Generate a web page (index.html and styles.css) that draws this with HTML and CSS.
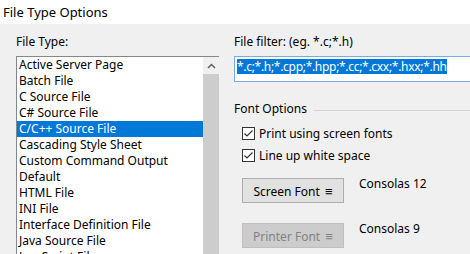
FILE: index.html
```html
<!DOCTYPE html>
<html lang="en">
<head>
    <meta charset="UTF-8">
    <meta name="viewport" content="width=device-width, initial-scale=1.0">
    <title>File Type Options</title>
    <link rel="stylesheet" href="styles.css">
</head>
<body>
    <div class="titlebar">File Type Options</div>
    <div class="dialog">
        <div class="left">
            <div class="label">File Type:</div>
            <div class="listbox">
                <ul class="items">
                    <li>Active Server Page</li>
                    <li>Batch File</li>
                    <li>C Source File</li>
                    <li>C# Source File</li>
                    <li class="selected">C/C++ Source File</li>
                    <li>Cascading Style Sheet</li>
                    <li>Custom Command Output</li>
                    <li>Default</li>
                    <li>HTML File</li>
                    <li>INI File</li>
                    <li>Interface Definition File</li>
                    <li>Java Source File</li>
                    <li>JavaScript File</li>
                </ul>
                <div class="scrollbar">
                    <div class="arrow">
                        <svg width="9" height="6" viewBox="0 0 9 6"><path d="M1 5 L4.5 1.5 L8 5" fill="none" stroke="#606060" stroke-width="1.5"/></svg>
                    </div>
                    <div class="thumb"></div>
                </div>
            </div>
        </div>
        <div class="right">
            <div class="label">File filter: (eg. *.c;*.h)</div>
            <div class="filter"><span class="sel">*.c;*.h;*.cpp;*.hpp;*.cc;*.cxx;*.hxx;*.hh</span></div>
            <div class="group">
                <div class="legend"><span>Font Options</span><span class="rule"></span></div>
                <div class="check">
                    <span class="box"><svg width="11" height="11" viewBox="0 0 11 11"><path d="M1.5 5.5 L4 8 L9.5 2.5" fill="none" stroke="#333" stroke-width="1.2"/></svg></span>
                    <span>Print using screen fonts</span>
                </div>
                <div class="check">
                    <span class="box"><svg width="11" height="11" viewBox="0 0 11 11"><path d="M1.5 5.5 L4 8 L9.5 2.5" fill="none" stroke="#333" stroke-width="1.2"/></svg></span>
                    <span>Line up white space</span>
                </div>
                <div class="font-row">
                    <button class="font-btn">Screen Font <span class="menu">&#8801;</span></button>
                    <span class="font-name">Consolas 12</span>
                </div>
                <div class="font-row">
                    <button class="font-btn" disabled>Printer Font <span class="menu">&#8801;</span></button>
                    <span class="font-name">Consolas 9</span>
                </div>
            </div>
        </div>
    </div>
</body>
</html>
```

FILE: styles.css
```css
body {
    margin: 0;
    width: 470px;
    height: 254px;
    overflow: hidden;
    background-color: #f0f0f0;
    font-family: "Noto Sans", "Segoe UI", sans-serif;
    font-size: 12px;
    line-height: 16px;
    color: #000;
}
.titlebar {
    height: 24px;
    line-height: 24px;
    padding-left: 3px;
    background-color: #fff;
    font-size: 13px;
}
.dialog {
    display: flex;
    gap: 15px;
    padding: 10px 0 0 16px;
}
.left {
    width: 203px;
    flex-shrink: 0;
}
.label {
    margin-bottom: 6px;
}
.listbox {
    display: flex;
    height: 220px;
    border: 1px solid #828790;
    border-right: none;
    background-color: #fff;
}
.items {
    flex: 1;
    list-style: none;
    margin: 0;
    padding: 0;
}
.items li {
    height: 16px;
    padding-left: 2px;
    white-space: nowrap;
}
.items li.selected {
    background-color: #0078d7;
    color: #fff;
}
.scrollbar {
    width: 16px;
    display: flex;
    flex-direction: column;
    background-color: #f0f0f0;
}
.arrow {
    height: 17px;
    display: flex;
    justify-content: center;
    align-items: center;
}
.thumb {
    flex: 1;
    background-color: #cdcdcd;
}
.right {
    flex: 1;
    min-width: 0;
}
.filter {
    width: 260px;
    height: 22px;
    border: 1px solid #7aa8e0;
    background-color: #fff;
    padding: 1px 2px;
    box-sizing: content-box;
    white-space: nowrap;
}
.sel {
    display: inline-block;
    height: 15px;
    line-height: 15px;
    margin-top: 1px;
    letter-spacing: -0.3px;
    background-color: #0078d7;
    color: #fff;
}
.group {
    margin-top: 19px;
}
.legend {
    display: flex;
    align-items: center;
    gap: 7px;
    margin-bottom: 9px;
}
.rule {
    flex: 1;
    height: 1px;
    background-color: #d5d5d5;
    margin-top: 2px;
}
.check {
    display: flex;
    align-items: flex-start;
    gap: 4px;
    margin-left: 8px;
    margin-bottom: 6px;
}
.box {
    width: 11px;
    height: 11px;
    margin-top: 1px;
    border: 1px solid #333;
    background-color: #fff;
    display: flex;
}
.font-row {
    display: flex;
    align-items: flex-start;
    gap: 15px;
    margin-left: 8px;
    margin-top: 14px;
}
.font-row + .font-row {
    margin-top: 20px;
}
.font-btn {
    width: 102px;
    height: 25px;
    padding: 0;
    border: 1px solid #adadad;
    background-color: #e1e1e1;
    font-family: inherit;
    font-size: 12px;
    color: #000;
}
.font-btn:disabled {
    background-color: #cccccc;
    border-color: #bfbfbf;
    color: #838383;
}
.menu {
    margin-left: 2px;
    font-size: 13px;
}
.font-name {
    margin-top: -2px;
}
```
